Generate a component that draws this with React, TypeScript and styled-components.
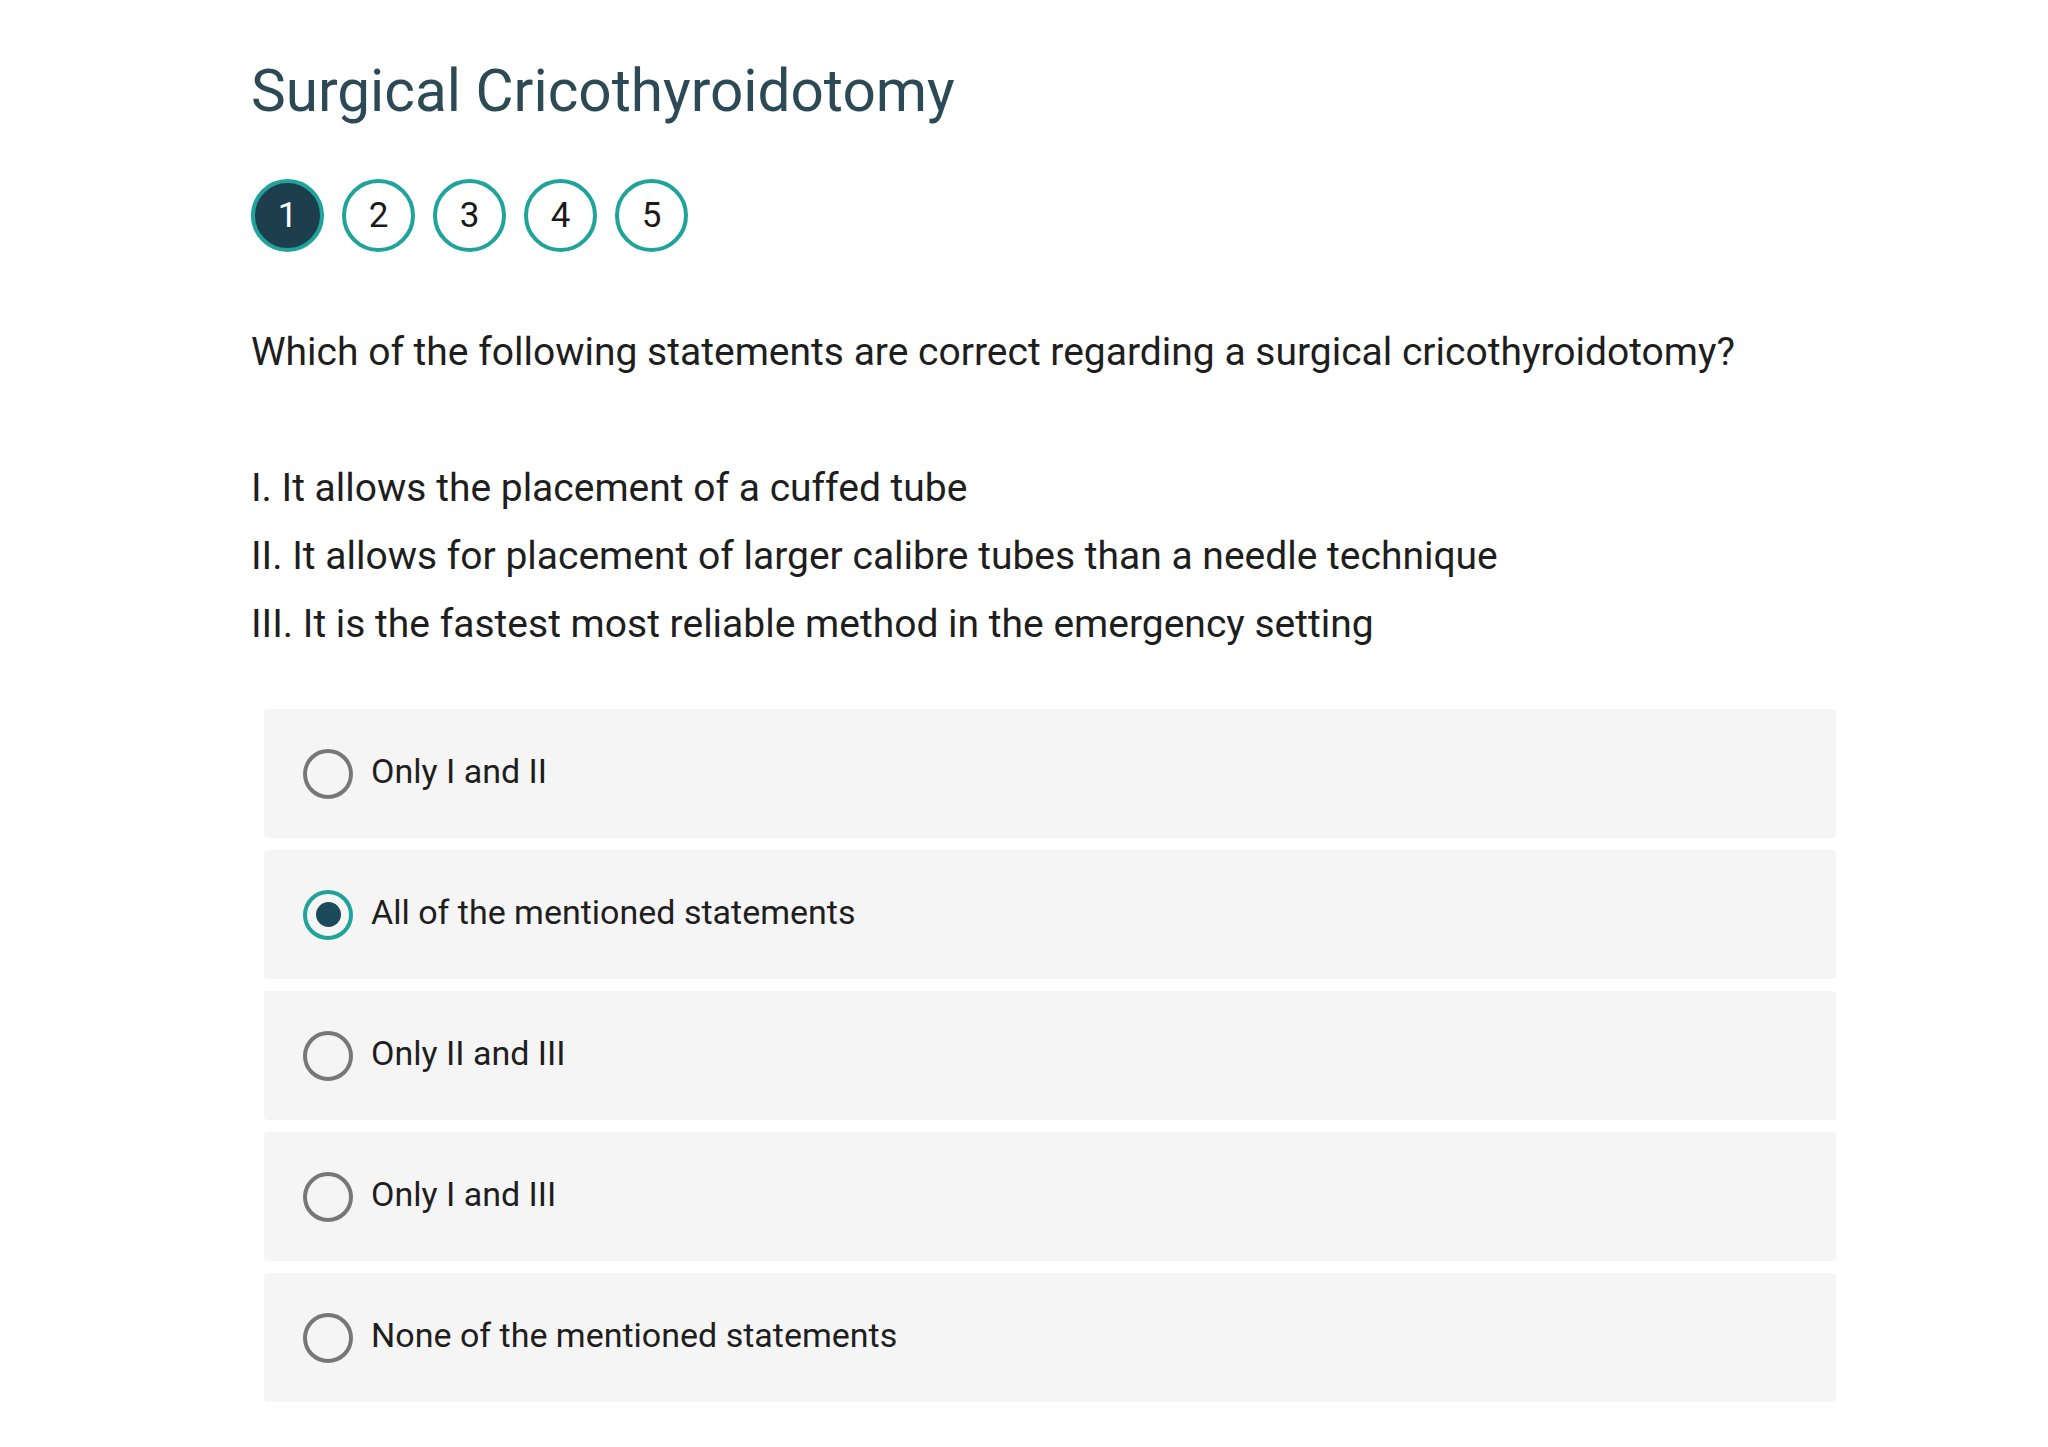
import React from 'react';
import styled, { createGlobalStyle } from 'styled-components';

const GlobalStyle = createGlobalStyle`
  html, body {
    margin: 0;
    padding: 0;
    background: #ffffff;
  }
  body {
    font-family: Roboto, 'Liberation Sans', Arial, sans-serif;
    color: #222;
  }
`;

const Page = styled.main`
  padding: 57px 0 46px 251px;
  width: 1585px;
`;

const Title = styled.h1`
  margin: 0;
  font-size: 58.5px;
  font-weight: 400;
  line-height: normal;
  color: #2c4a56;
`;

const Steps = styled.div`
  display: flex;
  gap: 18px;
  margin-top: 54px;
`;

const Step = styled.button<{ $active?: boolean }>`
  width: 73px;
  height: 73px;
  box-sizing: border-box;
  border-radius: 50%;
  border: 4px solid #1fa39a;
  background: ${(p) => (p.$active ? '#1d3f4d' : '#fff')};
  color: ${(p) => (p.$active ? '#fff' : '#1a1a1a')};
  font-family: Roboto, 'Liberation Sans', Arial, sans-serif;
  font-size: 35px;
  display: flex;
  align-items: center;
  justify-content: center;
  padding: 0;
  cursor: pointer;
`;

const Question = styled.p`
  margin: 66px 0 0;
  font-size: 39px;
  line-height: 68px;
  color: #1e1e1e;
`;

const Options = styled.div`
  display: flex;
  flex-direction: column;
  gap: 12px;
  margin: 51px 0 0 13px;
  width: 1572px;
`;

const Option = styled.label`
  display: flex;
  align-items: center;
  gap: 18px;
  height: 129px;
  padding-left: 39px;
  box-sizing: border-box;
  background: #f5f5f5;
  border-radius: 4px;
  font-size: 34px;
  color: #1e1e1e;
  cursor: pointer;
`;

const OptionText = styled.span`
  padding-bottom: 5px;
`;

const Radio = styled.span<{ $checked?: boolean }>`
  width: 50px;
  height: 50px;
  box-sizing: border-box;
  border-radius: 50%;
  border: 4px solid ${(p) => (p.$checked ? '#1fa39a' : '#777')};
  display: flex;
  align-items: center;
  justify-content: center;
  flex: none;

  &::after {
    content: '';
    display: ${(p) => (p.$checked ? 'block' : 'none')};
    width: 25px;
    height: 25px;
    border-radius: 50%;
    background: #1d4a5a;
  }
`;

const answers = [
  'Only I and II',
  'All of the mentioned statements',
  'Only II and III',
  'Only I and III',
  'None of the mentioned statements',
];

export default function App() {
  const [step, setStep] = React.useState(1);
  const [picked, setPicked] = React.useState(1);

  return (
    <>
      <GlobalStyle />
      <Page>
        <Title>Surgical Cricothyroidotomy</Title>
        <Steps>
          {[1, 2, 3, 4, 5].map((n) => (
            <Step key={n} $active={n === step} onClick={() => setStep(n)}>
              {n}
            </Step>
          ))}
        </Steps>
        <Question>
          Which of the following statements are correct regarding a surgical cricothyroidotomy?
          <br />
          <br />
          I. It allows the placement of a cuffed tube
          <br />
          II. It allows for placement of larger calibre tubes than a needle technique
          <br />
          III. It is the fastest most reliable method in the emergency setting
        </Question>
        <Options>
          {answers.map((a, i) => (
            <Option key={a} onClick={() => setPicked(i)}>
              <Radio $checked={picked === i} />
              <OptionText>{a}</OptionText>
            </Option>
          ))}
        </Options>
      </Page>
    </>
  );
}
